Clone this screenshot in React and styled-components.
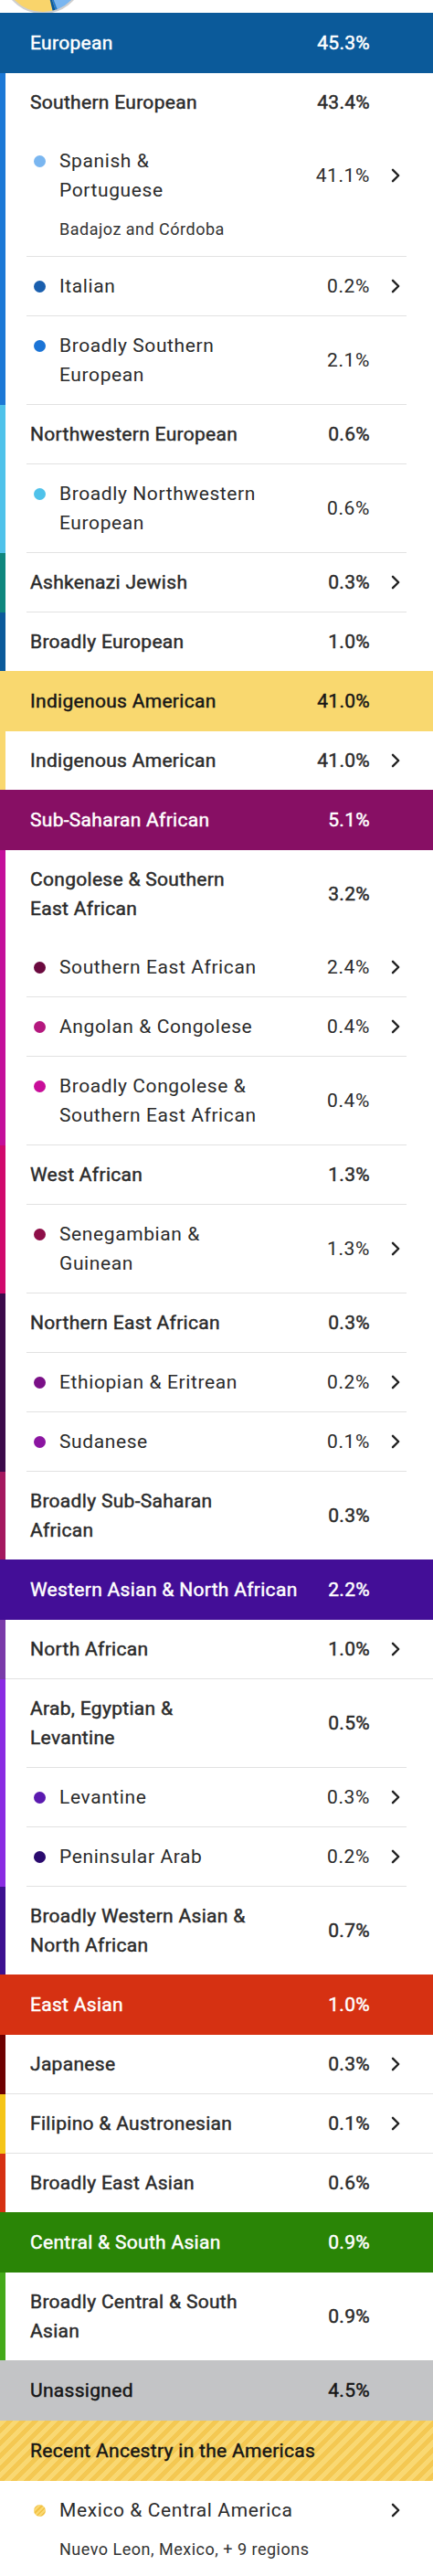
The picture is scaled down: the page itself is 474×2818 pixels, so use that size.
import React from "react";
import styled, { createGlobalStyle, css } from "styled-components";

const GlobalStyle = createGlobalStyle`
  html, body {
    margin: 0;
    padding: 0;
    background: #fff;
  }
  body {
    font-family: Roboto, "Noto Sans", "Liberation Sans", sans-serif;
    color: #2e2e2e;
  }
`;

// Roboto Medium is not available here, so regular with a thin stroke stands in for it
const medium = css`
  font-weight: 400;
  -webkit-text-stroke: 0.45px currentColor;
`;

const stripes = css`
  background: repeating-linear-gradient(
    135deg,
    #f9d872 0 5px,
    #f4c852 5px 10px
  );
`;

const Page = styled.div`
  width: 474px;
  background: #fff;
`;

const PieStrip = styled.div`
  height: 14px;
  overflow: hidden;

  svg {
    display: block;
  }
`;

const Header = styled.div`
  display: flex;
  align-items: center;
  height: 66px;
  box-sizing: border-box;
  padding-left: 33px;
  background: ${(p) => p.$bg};
  color: ${(p) => p.$fg};
  font-size: 21px;
  line-height: 32px;
  letter-spacing: 0.3px;
  ${medium}
  ${(p) => p.$striped && stripes}
`;

const HeaderTitle = styled.div`
  flex: 1;
`;

const Pct = styled.div`
  text-align: right;
  white-space: nowrap;
`;

const ChevronSlot = styled.div`
  width: 10px;
  margin: 0 36px 0 23px;
  display: flex;
  align-items: center;
  justify-content: center;
  color: #222;

  svg {
    display: block;
  }
`;

const Block = styled.div`
  border-left: 6px solid ${(p) => p.$bar};
`;

const Row = styled.div`
  padding: 16px 0 16px 27px;
`;

const Main = styled.div`
  display: flex;
  align-items: center;
  font-size: 21px;
  line-height: 32px;
  color: #2b2b2b;
  ${(p) =>
    p.$light
      ? css`
          font-weight: 400;
          letter-spacing: 0.6px;
        `
      : css`
          ${medium}
          letter-spacing: 0.3px;
        `}
`;

const Dot = styled.span`
  align-self: flex-start;
  flex: none;
  width: 13px;
  height: 13px;
  border-radius: 50%;
  margin: 10px 15px 0 4px;
  background: ${(p) => p.$color};
  ${(p) =>
    p.$striped &&
    css`
      background: repeating-linear-gradient(
        135deg,
        #f9d872 0 2px,
        #f2c246 2px 4px
      );
    `}
`;

const Name = styled.div`
  flex: 1;
  white-space: pre-line;
`;

const RowPct = styled.div`
  text-align: right;
  white-space: nowrap;
`;

const Sub = styled.div`
  margin-top: 14px;
  padding-left: 32px;
  font-size: 18px;
  line-height: 26px;
  letter-spacing: 0.5px;
  color: #333;
`;

const Divider = styled.div`
  height: 1px;
  background: #e2e2e2;
  margin: ${(p) => (p.$full ? "0" : "0 29px 0 23px")};
`;

const Chevron = () => (
  <svg width="10" height="16" viewBox="0 0 10 16">
    <path
      d="M2 1.8 L8.2 8 L2 14.2"
      fill="none"
      stroke="currentColor"
      strokeWidth="2.4"
      strokeLinecap="round"
      strokeLinejoin="round"
    />
  </svg>
);

const Pie = () => (
  <svg width="100" height="14" viewBox="0 0 100 14">
    <circle cx="47" cy="-31" r="45" fill="#f9d46b" />
    <path d="M47 -31 L86 -8.5 A45 45 0 0 1 63.1 11 Z" fill="#7ab6f0" />
    <path d="M47 -31 L63.1 11 A45 45 0 0 1 60.9 11.8 Z" fill="#1b78d6" />
    <path d="M47 -31 L60.9 11.8 A45 45 0 0 1 57.9 12.7 Z" fill="#0b5a9a" />
    <circle cx="47" cy="-31" r="45" fill="none" stroke="#cfcfcf" strokeWidth="2" />
  </svg>
);

// div: "inset" | "full" -> divider drawn below the row
const sections = [
  {
    title: "European",
    pct: "45.3%",
    bg: "#0b5a9a",
    fg: "#fff",
    blocks: [
      {
        bar: "#1b78d6",
        rows: [
          { name: "Southern European", pct: "43.4%" },
          { name: "Spanish &\nPortuguese", pct: "41.1%", dot: "#7ab6f0", sub: "Badajoz and Córdoba", chev: true, div: "inset" },
          { name: "Italian", pct: "0.2%", dot: "#1a5fae", chev: true, div: "inset" },
          { name: "Broadly Southern\nEuropean", pct: "2.1%", dot: "#1b74d6", div: "inset" },
        ],
      },
      {
        bar: "#4fc2ea",
        rows: [
          { name: "Northwestern European", pct: "0.6%", div: "inset" },
          { name: "Broadly Northwestern\nEuropean", pct: "0.6%", dot: "#4fc2ea", div: "inset" },
        ],
      },
      {
        bar: "#0f877e",
        rows: [{ name: "Ashkenazi Jewish", pct: "0.3%", chev: true, div: "inset" }],
      },
      {
        bar: "#0b5a9a",
        rows: [{ name: "Broadly European", pct: "1.0%" }],
      },
    ],
  },
  {
    title: "Indigenous American",
    pct: "41.0%",
    bg: "#f9d86f",
    fg: "#161616",
    blocks: [
      {
        bar: "#f9d86f",
        rows: [{ name: "Indigenous American", pct: "41.0%", chev: true }],
      },
    ],
  },
  {
    title: "Sub-Saharan African",
    pct: "5.1%",
    bg: "#870f64",
    fg: "#fff",
    blocks: [
      {
        bar: "#c40e9a",
        rows: [
          { name: "Congolese & Southern\nEast African", pct: "3.2%" },
          { name: "Southern East African", pct: "2.4%", dot: "#6b0a3f", chev: true, div: "inset" },
          { name: "Angolan & Congolese", pct: "0.4%", dot: "#b4187e", chev: true, div: "inset" },
          { name: "Broadly Congolese &\nSouthern East African", pct: "0.4%", dot: "#c80e99", div: "inset" },
        ],
      },
      {
        bar: "#d0086c",
        rows: [
          { name: "West African", pct: "1.3%", div: "inset" },
          { name: "Senegambian &\nGuinean", pct: "1.3%", dot: "#8e0f49", chev: true, div: "inset" },
        ],
      },
      {
        bar: "#3c0a4a",
        rows: [
          { name: "Northern East African", pct: "0.3%", div: "inset" },
          { name: "Ethiopian & Eritrean", pct: "0.2%", dot: "#7a1087", chev: true, div: "inset" },
          { name: "Sudanese", pct: "0.1%", dot: "#8b15a1", chev: true, div: "inset" },
        ],
      },
      {
        bar: "#a4185f",
        rows: [{ name: "Broadly Sub-Saharan\nAfrican", pct: "0.3%" }],
      },
    ],
  },
  {
    title: "Western Asian & North African",
    pct: "2.2%",
    bg: "#430e97",
    fg: "#fff",
    blocks: [
      {
        bar: "#7a3aa9",
        rows: [{ name: "North African", pct: "1.0%", chev: true, div: "full" }],
      },
      {
        bar: "#8a2be2",
        rows: [
          { name: "Arab, Egyptian &\nLevantine", pct: "0.5%", div: "inset" },
          { name: "Levantine", pct: "0.3%", dot: "#5b1ab0", chev: true, div: "inset" },
          { name: "Peninsular Arab", pct: "0.2%", dot: "#2a0a6e", chev: true, div: "inset" },
        ],
      },
      {
        bar: "#3d1190",
        rows: [{ name: "Broadly Western Asian &\nNorth African", pct: "0.7%" }],
      },
    ],
  },
  {
    title: "East Asian",
    pct: "1.0%",
    bg: "#d63112",
    fg: "#fff",
    blocks: [
      { bar: "#6e0000", rows: [{ name: "Japanese", pct: "0.3%", chev: true, div: "full" }] },
      { bar: "#f5c518", rows: [{ name: "Filipino & Austronesian", pct: "0.1%", chev: true, div: "full" }] },
      { bar: "#d63112", rows: [{ name: "Broadly East Asian", pct: "0.6%" }] },
    ],
  },
  {
    title: "Central & South Asian",
    pct: "0.9%",
    bg: "#2a8506",
    fg: "#fff",
    blocks: [
      { bar: "#44aa1a", rows: [{ name: "Broadly Central & South\nAsian", pct: "0.9%" }] },
    ],
  },
  {
    title: "Unassigned",
    pct: "4.5%",
    bg: "#c3c4c6",
    fg: "#161616",
    blocks: [],
  },
  {
    title: "Recent Ancestry in the Americas",
    pct: "",
    bg: "#f9d872",
    fg: "#161616",
    striped: true,
    blocks: [
      {
        bar: "transparent",
        rows: [
          {
            name: "Mexico & Central America",
            pct: "",
            stripedDot: true,
            sub: "Nuevo Leon, Mexico, + 9 regions",
            chev: true,
          },
        ],
      },
    ],
  },
];

const AncestryRow = ({ row }) => {
  const light = Boolean(row.dot || row.stripedDot);
  return (
    <>
      <Row>
        <Main $light={light}>
          {light && <Dot $color={row.dot} $striped={row.stripedDot} />}
          <Name>{row.name}</Name>
          <RowPct>{row.pct}</RowPct>
          <ChevronSlot>{row.chev && <Chevron />}</ChevronSlot>
        </Main>
        {row.sub && <Sub>{row.sub}</Sub>}
      </Row>
      {row.div && <Divider $full={row.div === "full"} />}
    </>
  );
};

const App = () => (
  <Page>
    <GlobalStyle />
    <PieStrip>
      <Pie />
    </PieStrip>
    {sections.map((s) => (
      <section key={s.title}>
        <Header $bg={s.bg} $fg={s.fg} $striped={s.striped}>
          <HeaderTitle>{s.title}</HeaderTitle>
          <Pct>{s.pct}</Pct>
          <ChevronSlot />
        </Header>
        {s.blocks.map((b, i) => (
          <Block key={i} $bar={b.bar}>
            {b.rows.map((r) => (
              <AncestryRow key={r.name} row={r} />
            ))}
          </Block>
        ))}
      </section>
    ))}
  </Page>
);

export default App;
